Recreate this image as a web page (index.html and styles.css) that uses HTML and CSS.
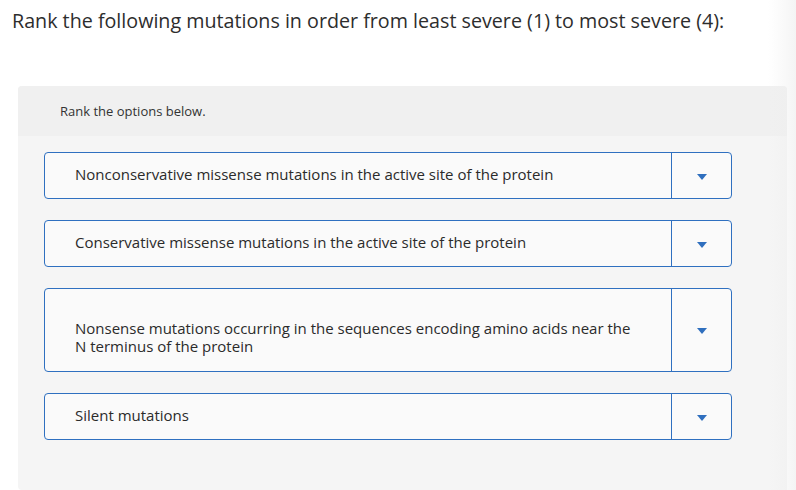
FILE: index.html
```html
<!DOCTYPE html>
<html>
<head>
<meta charset="utf-8">
<link rel="stylesheet" href="styles.css">
</head>
<body>
<div class="page">
  <h1 class="title">Rank the following mutations in order from least severe (1) to most severe (4):</h1>
  <div class="panel">
    <div class="panel-head">Rank the options below.</div>
    <div class="panel-body">
      <div class="row">
        <div class="row-text">Nonconservative missense mutations in the active site of the protein</div>
        <div class="row-select"><span class="caret"></span></div>
      </div>
      <div class="row">
        <div class="row-text">Conservative missense mutations in the active site of the protein</div>
        <div class="row-select"><span class="caret"></span></div>
      </div>
      <div class="row row-tall">
        <div class="row-text">Nonsense mutations occurring in the sequences encoding amino acids near the<br>N terminus of the protein</div>
        <div class="row-select"><span class="caret"></span></div>
      </div>
      <div class="row">
        <div class="row-text">Silent mutations</div>
        <div class="row-select"><span class="caret"></span></div>
      </div>
    </div>
  </div>
  <div class="edge-shade"></div>
</div>
</body>
</html>
```
FILE: styles.css
```css
html, body {
  margin: 0;
  padding: 0;
  background: #ffffff;
}
body {
  font-family: "Open Sans", Lato, "Liberation Sans", sans-serif;
  color: #2b2b2b;
  width: 796px;
  height: 490px;
  overflow: hidden;
}
.page {
  position: relative;
  width: 796px;
  height: 490px;
  padding: 0 9px 0 18px;
  box-sizing: border-box;
}
.title {
  margin: 0 0 0 -6px;
  padding: 8px 0 0 0;
  height: 86px;
  box-sizing: border-box;
  font-size: 19.7px;
  font-weight: 400;
  line-height: 26px;
  color: #2d2d2d;
}
.panel {
  background: #f5f5f5;
  border-radius: 4px 4px 0 4px;
  height: 404px;
}
.panel-head {
  background: #f0f0f0;
  height: 50px;
  border-radius: 4px 4px 0 0;
  padding-left: 42px;
  font-size: 13px;
  line-height: 50px;
  color: #333;
}
.panel-body {
  padding: 16px 55px 0 26px;
  display: flex;
  flex-direction: column;
  gap: 21px;
}
.row {
  display: flex;
  height: 47px;
  box-sizing: border-box;
  border: 1px solid #2f70c0;
  border-radius: 4px;
  background: #fafafa;
}
.row-tall {
  height: 84px;
}
.row-text {
  flex: 1;
  display: flex;
  align-items: center;
  padding-left: 30px;
  padding-bottom: 3px;
  font-size: 15px;
  line-height: 18px;
  color: #2b2b2b;
}
.row-tall .row-text {
  padding-top: 17px;
}
.row-select {
  width: 59px;
  border-left: 1px solid #2f70c0;
  display: flex;
  align-items: center;
  justify-content: center;
}
.caret {
  width: 0;
  height: 0;
  border-left: 5.5px solid transparent;
  border-right: 5.5px solid transparent;
  border-top: 6px solid #2f6fbe;
  margin-top: 2px;
}
.edge-shade {
  position: absolute;
  top: 0;
  right: 0;
  width: 28px;
  height: 490px;
  background: linear-gradient(to right, rgba(240,240,240,0) 0%, rgba(238,238,238,0.35) 60%, rgba(235,235,235,0.55) 100%);
  pointer-events: none;
}
```
